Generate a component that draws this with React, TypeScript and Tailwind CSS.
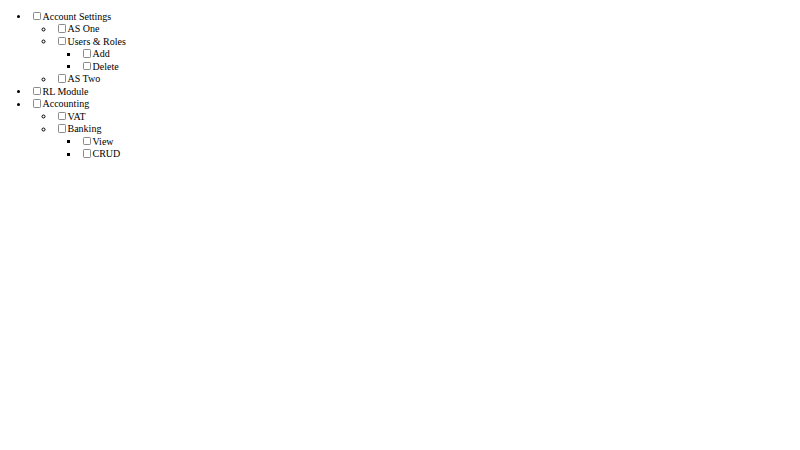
import React from "react";

type Node = { label: string; children?: Node[] };

const tree: Node[] = [
  {
    label: "Account Settings",
    children: [
      { label: "AS One" },
      { label: "Users & Roles", children: [{ label: "Add" }, { label: "Delete" }] },
      { label: "AS Two" },
    ],
  },
  { label: "RL Module" },
  {
    label: "Accounting",
    children: [
      { label: "VAT" },
      { label: "Banking", children: [{ label: "View" }, { label: "CRUD" }] },
    ],
  },
];

const listClass = ["list-disc", "list-[circle]", "list-[square]"];

function List({ items, depth }: { items: Node[]; depth: number }) {
  return (
    <ul className={`${listClass[Math.min(depth, 2)]} pl-10`}>
      {items.map((n) => (
        <li key={n.label}>
          <div className="flex items-start h-[20px]">
            <input
              type="checkbox"
              className="appearance-none mt-[3px] ml-[4px] mr-[3px] w-[13px] h-[13px] shrink-0 border border-solid border-[#8a8a8a] rounded-[2px] bg-white"
            />
            <span className="leading-[20px] pt-[1px]">{n.label}</span>
          </div>
          {n.children && <List items={n.children} depth={depth + 1} />}
        </li>
      ))}
    </ul>
  );
}

export default function App() {
  return (
    <div className="[zoom:0.625] w-[1280px] h-[720px] bg-white text-black px-2 pt-4 text-[16px] leading-[20px] font-['Liberation_Serif',serif]">
      <List items={tree} depth={0} />
    </div>
  );
}
